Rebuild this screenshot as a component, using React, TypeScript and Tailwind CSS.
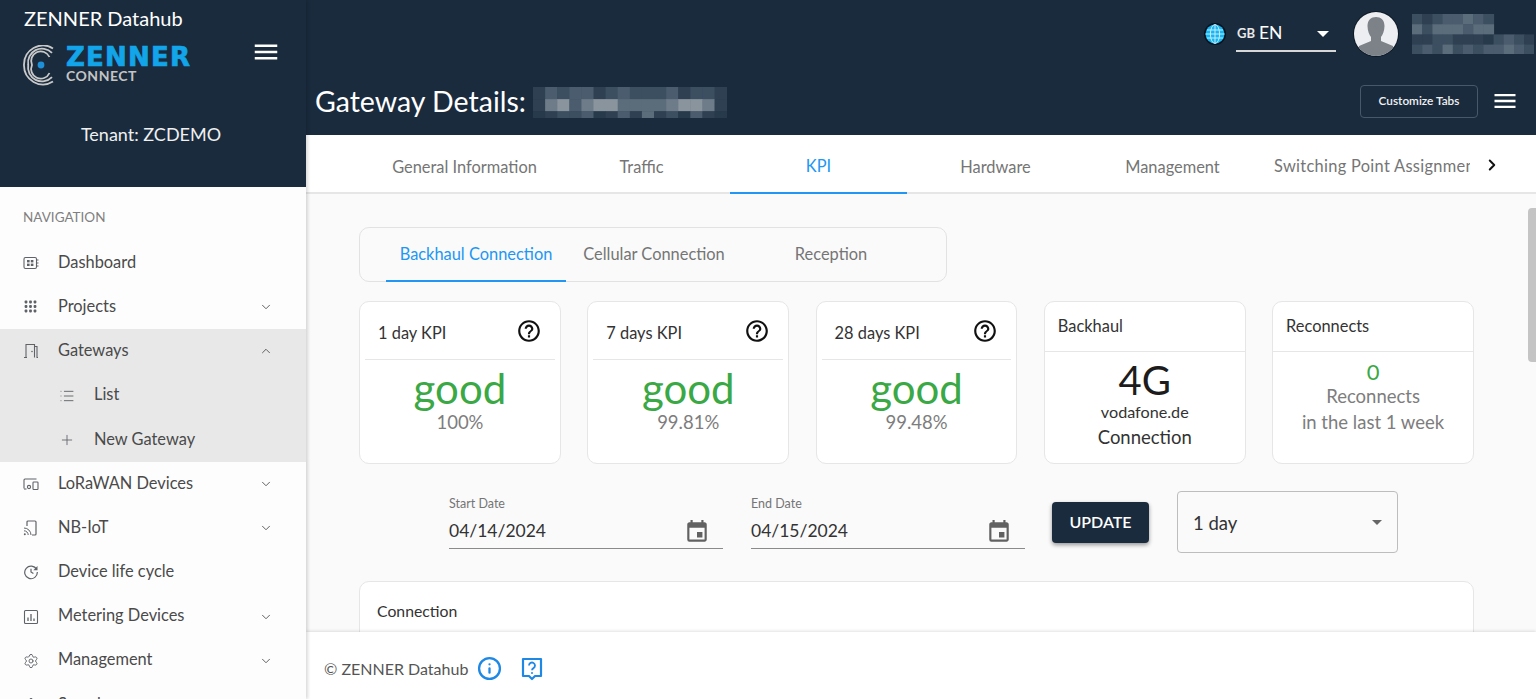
import React from "react";
import { ChevronDown, ChevronUp, ChevronRight, List, Plus, Settings, Info } from "lucide-react";
import { MdEvent, MdOutlineHelpOutline, MdArrowDropDown, MdMenu } from "react-icons/md";

const F = "font-['Lato','Noto_Sans',sans-serif]";

function Pixels({ w, h, cell, rows, className }: { w: number; h: number; cell: number; rows: string[][]; className?: string }) {
  return (
    <svg width={w} height={h} viewBox={`0 0 ${w} ${h}`} className={className}>
      {rows.map((r, y) =>
        r.map((c, x) => (c ? <rect key={x + "-" + y} x={x * cell} y={y * cell} width={cell + 0.5} height={cell + 0.5} fill={c} /> : null))
      )}
    </svg>
  );
}

const A = "#3c4f61", B = "#4a5c6d", C = "#5b6c7b", D = "#2e4052", E = "#6e7c89", G = "#8a949d", H = "#273a4c";
const nameRows = [
  [A, D, A, B, B, C, B, A, "", "", "", ""],
  [C, A, C, C, C, B, C, C, "", "", "", ""],
  [D, D, A, A, D, D, D, H, A, B, A, D],
  [A, B, A, C, A, B, A, B, B, C, B, A],
];
const gwRows = [
  [D, B, A, B, B, D, A, B, A, A, A, B, D, A, A, D],
  [D, E, G, B, E, G, G, C, C, C, C, E, G, G, E, D],
  [H, D, A, A, B, H, D, B, D, C, D, A, H, B, D, H],
];

const I = "w-[16px] h-[16px] text-[#5f6368]";

function DashIcon() {
  return (
    <svg viewBox="0 0 16 16" className={I} fill="none" stroke="currentColor">
      <rect x="1" y="2.5" width="12.5" height="11" rx="1.5" strokeWidth="1.1" />
      <rect x="4" y="5" width="2.6" height="2.4" fill="currentColor" stroke="none" />
      <rect x="7.8" y="5" width="2.6" height="2.4" fill="currentColor" stroke="none" />
      <rect x="4" y="8.6" width="2.6" height="2.4" fill="currentColor" stroke="none" />
      <rect x="7.8" y="8.6" width="2.6" height="2.4" fill="currentColor" stroke="none" />
      <path d="M14 5h1.5M14 8h1.5M14 11h1.5" strokeWidth="1" />
    </svg>
  );
}
function GridIcon() {
  return (
    <svg viewBox="0 0 16 16" className={I} fill="currentColor">
      {[3, 7.5, 12].map((y) => [3, 7.5, 12].map((x) => <rect key={x + "" + y} x={x - 1.4} y={y - 1.4} width="2.8" height="2.8" rx="0.8" />))}
    </svg>
  );
}
function DoorIcon() {
  return (
    <svg viewBox="0 0 16 16" className={I} fill="none" stroke="currentColor" strokeWidth="1.1">
      <path d="M1 14.5h3M3 14.5V1.500h8.500v13M11.500 3.500H14v11h1" />
      <circle cx="9" cy="8.500" r="0.8" fill="currentColor" stroke="none" />
    </svg>
  );
}
function DevicesIcon() {
  return (
    <svg viewBox="0 0 16 16" className={I} fill="none" stroke="currentColor" strokeWidth="1.1">
      <path d="M1 12.500V4a1 1 0 0 1 1-1h11.500" />
      <path d="M1 13h2.500" />
      <circle cx="6" cy="11" r="1.600" />
      <rect x="10" y="6" width="5" height="7.500" rx="0.7" />
    </svg>
  );
}
function CastIcon() {
  return (
    <svg viewBox="0 0 16 16" className={I} fill="none" stroke="currentColor" strokeWidth="1.2">
      <path d="M4 6V2a1 1 0 0 1 1-1h7a1 1 0 0 1 1 1v12a1 1 0 0 1-1 1H9" />
      <path d="M1 8a7 7 0 0 1 7 7M1 10.800A4.200 4.200 0 0 1 5.200 15" strokeWidth="1" />
      <circle cx="1.800" cy="14.200" r="1" fill="currentColor" stroke="none" />
    </svg>
  );
}
function CycleIcon() {
  return (
    <svg viewBox="0 0 16 16" className={I} fill="none" stroke="currentColor" strokeWidth="1.2">
      <path d="M13.600 5.500A6.300 6.300 0 1 0 14.300 8" />
      <path d="M14.500 2v4.200h-4.200z" fill="currentColor" stroke="none" />
      <path d="M8 4.800V8l2.400 1.600" />
    </svg>
  );
}
function MeterIcon() {
  return (
    <svg viewBox="0 0 16 16" className={I} fill="none" stroke="currentColor" strokeWidth="1.1">
      <rect x="1.500" y="1.500" width="13" height="13" rx="1" />
      <path d="M5 12V8.500M8 12V5M11 12V9.500" strokeWidth="1.300" />
    </svg>
  );
}

type Row = { label: string; icon: React.ReactNode; chevron?: "down" | "up"; sub?: boolean };
const top: Row[] = [
  { label: "Dashboard", icon: <DashIcon /> },
  { label: "Projects", icon: <GridIcon />, chevron: "down" },
];
const gateways: Row[] = [
  { label: "Gateways", icon: <DoorIcon />, chevron: "up" },
  { label: "List", icon: <List className={I} strokeWidth={1.4} />, sub: true },
  { label: "New Gateway", icon: <Plus className={I} strokeWidth={1.3} />, sub: true },
];
const rest: Row[] = [
  { label: "LoRaWAN Devices", icon: <DevicesIcon />, chevron: "down" },
  { label: "NB-IoT", icon: <CastIcon />, chevron: "down" },
  { label: "Device life cycle", icon: <CycleIcon /> },
  { label: "Metering Devices", icon: <MeterIcon />, chevron: "down" },
  { label: "Management", icon: <Settings className={I} strokeWidth={1.4} />, chevron: "down" },
  { label: "Search", icon: <Settings className={I} strokeWidth={1.4} /> },
];

function NavRow({ r }: { r: Row }) {
  return (
    <div className={`h-[44.2px] flex items-center pr-[33px] ${r.sub ? "pl-[59px]" : "pl-[23px]"}`}>
      <span className="w-[35px] flex shrink-0">{r.icon}</span>
      <span className="flex-1 pb-[2px] text-[16.4px] text-[#4a4a4a]">{r.label}</span>
      {r.chevron === "down" && <ChevronDown className="w-[14px] h-[14px] text-[#555]" strokeWidth={1.6} />}
      {r.chevron === "up" && <ChevronUp className="w-[14px] h-[14px] text-[#555]" strokeWidth={1.6} />}
    </div>
  );
}

function Logo() {
  return (
    <svg width="36" height="42" viewBox="0 0 36 42" fill="none" stroke="#c9c9c9" strokeWidth="1.800">
      <circle cx="19" cy="20" r="3.400" fill="#1e90d8" stroke="none" />
      <path d="M31 3.400A19 19 0 0 0 2 20a19 19 0 0 0 29 16.600" />
      <path d="M30 7.800A14 14 0 0 0 6.200 20 14 14 0 0 0 30 32.200" />
      <path d="M27.500 12A9.500 9.500 0 0 0 10 20a9.500 9.500 0 0 0 17.500 8" />
    </svg>
  );
}

function Sidebar() {
  return (
    <aside className="w-[306px] shrink-0 flex flex-col bg-[#fdfdfd] shadow-[2px_0_3px_rgba(0,0,0,0.14)] z-20">
      <div className="h-[187px] bg-[#1a2b3e] pl-[24px] pt-[6px] shrink-0 text-white">
        <div className="text-[20px] leading-[24px]">ZENNER Datahub</div>
        <div className="flex items-start mt-[15px] -ml-[2px] h-[42px]">
          <Logo />
          <div className="ml-[8px] flex flex-col w-[125px]">
            <span className="font-['DejaVu_Sans',sans-serif] text-[26px] leading-[24px] font-bold text-[#12a5ea] tracking-[1.2px] [-webkit-text-stroke:0.7px_#12a5ea]">ZENNER</span>
            <span className="text-[14px] leading-[14px] text-[#c4c4c4] tracking-[0.5px] font-bold">CONNECT</span>
          </div>
          <MdMenu className="ml-[60px] -mt-[8px] text-white shrink-0" size={30} />
        </div>
        <div className="mt-[35px] -ml-[28px] text-center text-[18px] leading-[24px] text-[#f0f0f0]">Tenant: ZCDEMO</div>
      </div>
      <div className="flex-1 overflow-hidden">
        <div className="pl-[23px] pt-[22px] pb-[16px] text-[13.5px] leading-[16px] text-[#808080]">NAVIGATION</div>
        {top.map((r) => <NavRow key={r.label} r={r} />)}
        <div className="bg-[#e8e8e8]">{gateways.map((r) => <NavRow key={r.label} r={r} />)}</div>
        {rest.map((r) => <NavRow key={r.label} r={r} />)}
      </div>
    </aside>
  );
}

function Globe() {
  return (
    <svg width="22" height="22" viewBox="0 0 22 22" fill="none">
      <circle cx="11" cy="11" r="11" fill="#06121c" />
      <circle cx="11" cy="11" r="9.500" fill="#16b6f2" />
      <g stroke="#d6f2ff" strokeWidth="0.9">
        <path d="M1.500 11h19M3 7h16M3 15h16" />
        <path d="M11 1.500v19" />
        <ellipse cx="11" cy="11" rx="4.600" ry="9.500" />
      </g>
    </svg>
  );
}

function Avatar() {
  return (
    <svg width="46" height="46" viewBox="0 0 46 46">
      <clipPath id="av"><circle cx="23" cy="23" r="22" /></clipPath>
      <circle cx="23" cy="23" r="23" fill="#0e1a26" />
      <circle cx="23" cy="23" r="22" fill="#eceef1" />
      <g clipPath="url(#av)" fill="#7d8288">
        <path d="M14.500 15c0-6 3.600-9 8.500-9s8.500 3 8.500 9c0 5-2 9-3.500 11v4l12 5v12H6V35l12-5v-4c-1.500-2-3.500-6-3.500-11z" />
      </g>
    </svg>
  );
}

function Header() {
  return (
    <header className="h-[135px] shrink-0 bg-[#1a2b3e] text-white pl-[9px] pr-[17px] flex flex-col">
      <div className="flex items-center justify-end h-[67px] -mr-[15px]">
        <Globe />
        <div className="ml-[10px] w-[100px] h-[34px] border-b-2 border-[#d8d8d8] flex items-center relative top-[1px]">
          <span className="text-[13px] font-bold ml-[1px] mt-[1px] text-[#e8e8e8]">GB</span>
          <span className="text-[17.5px] ml-[4px]">EN</span>
          <span className="ml-auto mr-[7px] w-0 h-0 border-l-[6px] border-r-[6px] border-t-[6px] border-l-transparent border-r-transparent border-t-white" />
        </div>
        <div className="ml-[17px]"><Avatar /></div>
        <Pixels className="ml-[13px]" w={122} h={40} cell={10.2} rows={nameRows} />
      </div>
      <div className="flex items-center h-[68px]">
        <span className="text-[28.5px] leading-[34px]">Gateway Details:</span>
        <Pixels className="ml-[7px] mt-[2px]" w={194} h={31} cell={12.1} rows={gwRows} />
        <button className="ml-auto h-[33px] w-[118px] border border-[#46586a] rounded-[4px] text-[11.8px] font-semibold text-[#f0f0f0]">Customize Tabs</button>
        <MdMenu className="ml-[13px]" size={28} />
      </div>
    </header>
  );
}

const tabs = ["General Information", "Traffic", "KPI", "Hardware", "Management"];

function Tabs() {
  return (
    <div className="h-[59px] shrink-0 bg-white border-b-2 border-[#e6e6e6] flex pl-[70px] text-[16.4px] text-[#757575]">
      {tabs.map((t) => (
        <div key={t} className={`w-[177px] h-[59px] pt-[6px] flex items-center justify-center ${t === "KPI" ? "border-b-2 border-[#2196f3] text-[#2196f3]" : ""}`}>{t}</div>
      ))}
      <div className="w-[222px] h-[57px] pl-[13px] pt-[6px] flex items-center overflow-hidden whitespace-nowrap">
        <span className="w-[196px] overflow-hidden shrink-0 tracking-[0.3px]">Switching Point Assignment</span>
      </div>
      <div className="flex items-center pt-[3px]"><ChevronRight className="w-[18px] h-[18px] text-[#111]" strokeWidth={2.6} /></div>
    </div>
  );
}

function KpiCard({ title, value, pct }: { title: string; value: string; pct: string }) {
  return (
    <div className="h-[163px] rounded-[10px] border border-[#e6e6e6] bg-white px-[5px]">
      <div className="h-[58px] border-b border-[#e6e6e6] flex items-center justify-between pl-[13px] pr-[13px] text-[16.4px] text-[#333]">
        <span className="pt-[5px]">{title}</span>
        <MdOutlineHelpOutline size={26} className="text-[#111]" />
      </div>
      <div className="text-center">
        <div className="text-[42px] leading-[40px] mt-[8px] text-[#3aa845]">{value}</div>
        <div className="text-[18.5px] leading-[20px] mt-[4px] text-[#7d7d7d]">{pct}</div>
      </div>
    </div>
  );
}

function DateField({ label, value }: { label: string; value: string }) {
  return (
    <div className="w-[274px]">
      <div className="text-[12.5px] leading-[14px] text-[#757575]">{label}</div>
      <div className="mt-[4px] h-[34px] border-b border-[#8a8a8a] flex items-center justify-between text-[17.5px] text-[#333] pr-[13px]">
        <span>{value}</span>
        <MdEvent size={26} className="text-[#616161]" />
      </div>
    </div>
  );
}

function Content() {
  return (
    <div className="flex-1 min-h-0 overflow-hidden bg-[#fafafa] pl-[53px] pr-[62px] pt-[33px] relative">
      <div className="w-[588px] h-[55px] rounded-[10px] border border-[#e2e2e2] flex pl-[26px] text-[16.4px] text-[#757575]">
        <div className="w-[180px] h-[54px] border-b-2 border-[#2196f3] text-[#2196f3] flex items-center justify-center">Backhaul Connection</div>
        <div className="w-[176px] h-[53px] flex items-center justify-center">Cellular Connection</div>
        <div className="w-[178px] h-[53px] flex items-center justify-center">Reception</div>
      </div>

      <div className="grid grid-cols-5 gap-x-[26.4px] mt-[19px]">
        <KpiCard title="1 day KPI" value="good" pct="100%" />
        <KpiCard title="7 days KPI" value="good" pct="99.81%" />
        <KpiCard title="28 days KPI" value="good" pct="99.48%" />
        <div className="h-[163px] rounded-[10px] border border-[#e6e6e6] bg-white">
          <div className="h-[50px] border-b border-[#e6e6e6] flex items-center pl-[13px] text-[16.4px] text-[#333]">Backhaul</div>
          <div className="text-center text-[#222]">
            <div className="text-[40px] leading-[44px] mt-[6px] text-[#1c1c1c]">4G</div>
            <div className="text-[16.2px] leading-[20px] mt-0 text-[#333]">vodafone.de</div>
            <div className="text-[18.5px] leading-[24px] mt-[3px] text-[#333]">Connection</div>
          </div>
        </div>
        <div className="h-[163px] rounded-[10px] border border-[#e6e6e6] bg-white">
          <div className="h-[50px] border-b border-[#e6e6e6] flex items-center pl-[13px] text-[16.4px] text-[#333]">Reconnects</div>
          <div className="text-center text-[18.5px] text-[#7d7d7d]">
            <div className="text-[22px] leading-[23px] mt-[8px] text-[#3aa845]">0</div>
            <div className="leading-[26px]">Reconnects</div>
            <div className="leading-[26px]">in the last 1 week</div>
          </div>
        </div>
      </div>

      <div className="flex items-start mt-[27px] pl-[90px]">
        <div className="flex gap-x-[28px] mt-[6px]">
          <DateField label="Start Date" value="04/14/2024" />
          <DateField label="End Date" value="04/15/2024" />
        </div>
        <button className="ml-[27px] mt-[11px] w-[97px] h-[41px] pb-[2px] bg-[#1a2b3e] rounded-[4px] text-white text-[16px] font-semibold shadow-[0_2px_4px_rgba(0,0,0,0.4)]">UPDATE</button>
        <div className="ml-[28px] w-[221px] h-[62px] border border-[#bdbdbd] rounded-[4px] flex items-center pl-[15px] pr-[8px] text-[18.5px] text-[#333] justify-between">
          <span className="pt-[3px]">1 day</span>
          <MdArrowDropDown size={24} className="text-[#666]" />
        </div>
      </div>

      <div className="mt-[28px] h-[120px] rounded-[10px] border border-[#e6e6e6] bg-white pl-[17px] pt-[17px] text-[15.8px] leading-[24px] text-[#333]">Connection</div>

      <div className="absolute top-[14px] right-0 w-[8px] h-[154px] bg-[#c4c4c4] rounded-l-[4px]" />
    </div>
  );
}

function BubbleQ() {
  return (
    <svg width="22" height="24" viewBox="0 0 22 24" fill="none" stroke="#1e88e5" strokeWidth="2.200">
      <path d="M2 2h18v17h-6l-3 3-3-3H2z" strokeLinejoin="round" />
      <path d="M8 8.500a3 3 0 1 1 4.500 2.600c-1 .6-1.500 1.200-1.500 2.200" strokeWidth="1.800" />
      <circle cx="11" cy="16" r="1" fill="#1e88e5" stroke="none" />
    </svg>
  );
}

function Footer() {
  return (
    <footer className="h-[67px] shrink-0 bg-white shadow-[0_-1px_3px_rgba(0,0,0,0.12)] z-10 flex items-center pl-[18px] pt-[6px] text-[16px] text-[#555]">
      <span>© ZENNER Datahub</span>
      <Info className="ml-[9px] w-[25px] h-[25px] text-[#1e88e5]" strokeWidth={2.2} />
      <span className="ml-[19px]"><BubbleQ /></span>
    </footer>
  );
}

export default function App() {
  return (
    <div className={`h-[699px] w-[1536px] flex overflow-hidden ${F}`}>
      <Sidebar />
      <main className="flex-1 min-w-0 flex flex-col">
        <Header />
        <Tabs />
        <Content />
        <Footer />
      </main>
    </div>
  );
}
